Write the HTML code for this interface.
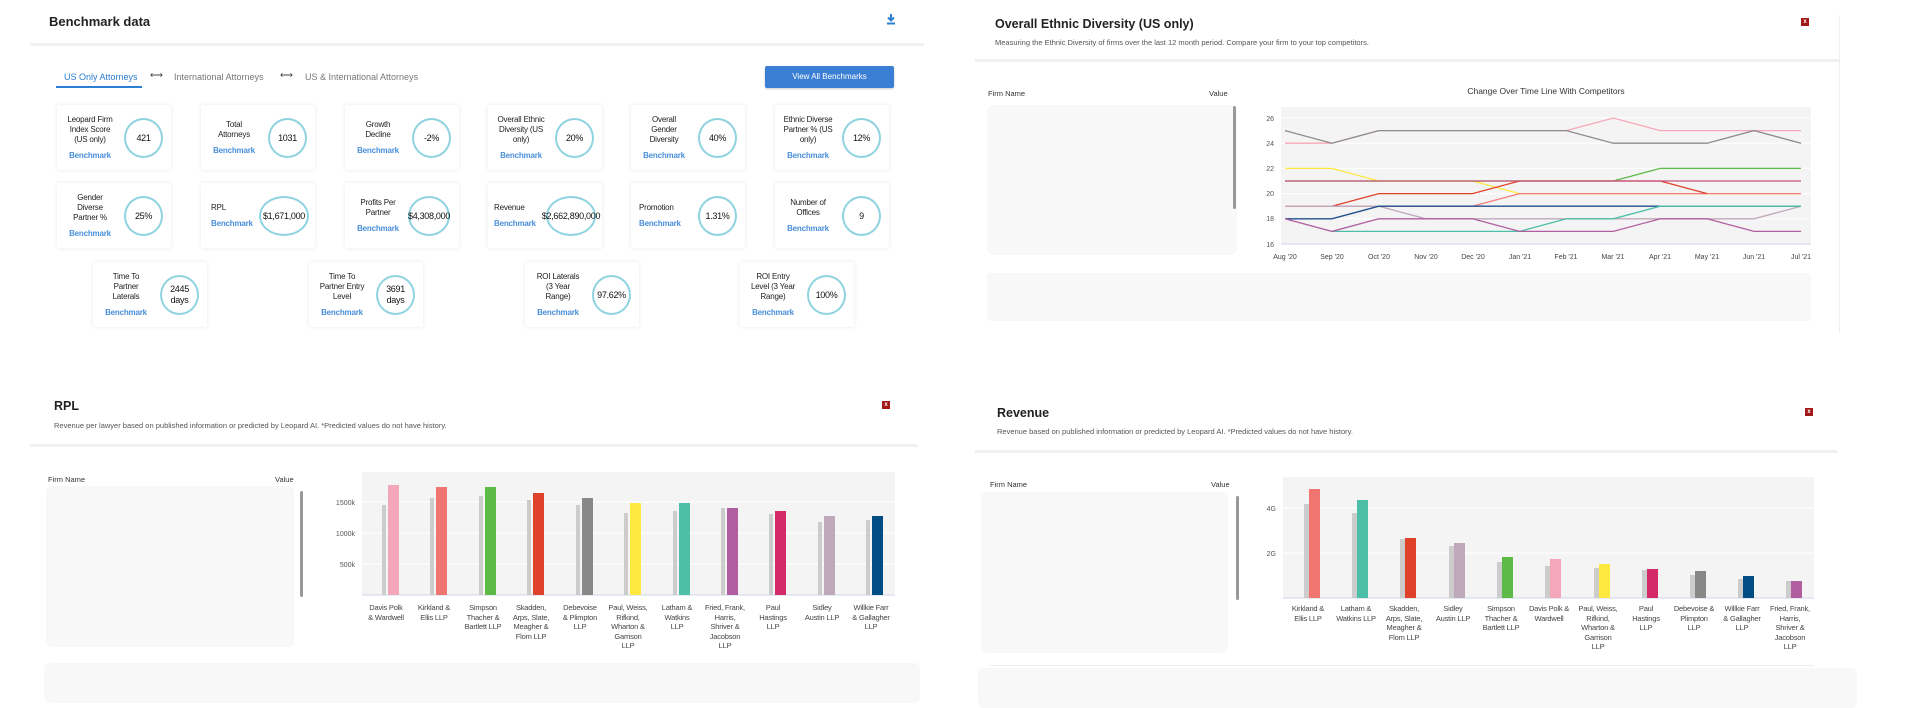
<!DOCTYPE html>
<html><head><meta charset="utf-8">
<style>
*{margin:0;padding:0;box-sizing:border-box}
body{width:1920px;height:691px;background:#fff;font-family:"Liberation Sans",sans-serif;color:#222;position:relative;overflow:hidden}
.a{position:absolute}
.t{font-weight:bold;font-size:13px;color:#222}
.sub{font-size:7.5px;color:#555}
.div{height:3px;background:#f1f1f1}
.card{position:absolute;width:114px;height:65px;background:#fff;box-shadow:0 0 4px rgba(0,0,0,0.09);border-radius:2px}
.card .lb{position:absolute;left:4px;width:58px;top:0;height:65px;display:flex;flex-direction:column;justify-content:center;align-items:center;text-align:center;font-size:8px;line-height:10px;color:#222;white-space:nowrap;letter-spacing:-0.2px}
.card .lb.l{align-items:flex-start;text-align:left;left:12px}
.card .lb b{color:#4a8fdb;font-size:8px;margin-top:6px;display:block}
.card .c{position:absolute;left:67px;top:13px;width:39px;height:40px;border:2px solid #8fd3e0;border-radius:50%;display:flex;align-items:center;justify-content:center;font-size:9px;color:#111;white-space:nowrap;text-align:center;line-height:11px;letter-spacing:-0.3px}
.cls{position:absolute;width:8px;height:8px;background:#a01818;color:#fff;font-size:6px;line-height:8px;text-align:center;font-weight:bold}
.lst{position:absolute;background:#f8f8f8;border-radius:6px}
.sb{position:absolute;width:3px;background:#999;border-radius:2px}
.hd{position:absolute;font-size:7.5px;color:#333}
.xl{position:absolute;font-size:7.5px;color:#444;text-align:center;width:48px;line-height:9.5px;letter-spacing:-0.2px}
</style></head><body>

<div class="a t" style="left:49px;top:14px">Benchmark data</div>
<svg class="a" style="left:886px;top:13px" width="10" height="12" viewBox="0 0 10 12"><path d="M5 1v6M2 4.5l3 3 3-3" stroke="#2d7fd3" stroke-width="2" fill="none"/><rect x="1" y="9.5" width="8" height="2" fill="#2d7fd3"/></svg>
<div class="a div" style="left:30px;top:43px;width:894px"></div>
<div class="a" style="left:64px;top:72px;font-size:9px;color:#2d7fd3">US Only Attorneys</div>
<div class="a" style="left:56px;top:86px;width:86px;height:2px;background:#2d7fd3"></div>
<div class="a" style="left:150px;top:70px;font-size:9px;color:#444">&#10231;</div>
<div class="a" style="left:174px;top:72px;font-size:9px;color:#777">International Attorneys</div>
<div class="a" style="left:280px;top:70px;font-size:9px;color:#444">&#10231;</div>
<div class="a" style="left:305px;top:72px;font-size:9px;color:#777">US &amp; International Attorneys</div>
<div class="a" style="left:765px;top:66px;width:129px;height:22px;background:#3b7fd4;border-radius:2px;color:#fff;font-size:8px;text-align:center;line-height:22px;box-shadow:0 1px 2px rgba(0,0,0,.2)">View All Benchmarks</div>

<div class="card" style="left:57px;top:105px"><div class="lb">Leopard Firm<br>Index Score<br>(US only)<b>Benchmark</b></div><div class="c">421</div></div>
<div class="card" style="left:201px;top:105px"><div class="lb">Total<br>Attorneys<b>Benchmark</b></div><div class="c">1031</div></div>
<div class="card" style="left:345px;top:105px"><div class="lb">Growth<br>Decline<b>Benchmark</b></div><div class="c">-2%</div></div>
<div class="card" style="left:488px;top:105px"><div class="lb">Overall Ethnic<br>Diversity (US<br>only)<b>Benchmark</b></div><div class="c">20%</div></div>
<div class="card" style="left:631px;top:105px"><div class="lb">Overall<br>Gender<br>Diversity<b>Benchmark</b></div><div class="c">40%</div></div>
<div class="card" style="left:775px;top:105px"><div class="lb">Ethnic Diverse<br>Partner % (US<br>only)<b>Benchmark</b></div><div class="c">12%</div></div>

<div class="card" style="left:57px;top:183px"><div class="lb">Gender<br>Diverse<br>Partner %<b>Benchmark</b></div><div class="c">25%</div></div>
<div class="card" style="left:201px;top:183px"><div class="lb l" style="left:10px">RPL<b>Benchmark</b></div><div class="c" style="left:58px;width:50px">$1,671,000</div></div>
<div class="card" style="left:345px;top:183px"><div class="lb">Profits Per<br>Partner<b>Benchmark</b></div><div class="c" style="left:63px;width:42px">$4,308,000</div></div>
<div class="card" style="left:488px;top:183px"><div class="lb l" style="left:6px">Revenue<b>Benchmark</b></div><div class="c" style="left:58px;width:50px">$2,662,890,000</div></div>
<div class="card" style="left:631px;top:183px"><div class="lb l" style="left:8px">Promotion<b>Benchmark</b></div><div class="c">1.31%</div></div>
<div class="card" style="left:775px;top:183px"><div class="lb">Number of<br>Offices<b>Benchmark</b></div><div class="c">9</div></div>

<div class="card" style="left:93px;top:262px"><div class="lb">Time To<br>Partner<br>Laterals<b>Benchmark</b></div><div class="c">2445<br>days</div></div>
<div class="card" style="left:309px;top:262px"><div class="lb">Time To<br>Partner Entry<br>Level<b>Benchmark</b></div><div class="c">3691<br>days</div></div>
<div class="card" style="left:525px;top:262px"><div class="lb">ROI Laterals<br>(3 Year<br>Range)<b>Benchmark</b></div><div class="c">97.62%</div></div>
<div class="card" style="left:740px;top:262px"><div class="lb">ROI Entry<br>Level (3 Year<br>Range)<b>Benchmark</b></div><div class="c">100%</div></div>

<div class="a t" style="left:995px;top:17px;font-size:12.5px">Overall Ethnic Diversity (US only)</div>
<div class="a sub" style="left:995px;top:38px">Measuring the Ethnic Diversity of firms over the last 12 month period. Compare your firm to your top competitors.</div>
<div class="cls" style="left:1801px;top:18px">x</div>
<div class="a" style="left:1839px;top:15px;width:1px;height:318px;background:#f0f0f0"></div>
<div class="a div" style="left:975px;top:59px;width:864px"></div>
<div class="hd" style="left:988px;top:89px">Firm Name</div>
<div class="hd" style="left:1209px;top:89px">Value</div>
<div class="lst" style="left:987px;top:105px;width:250px;height:150px"></div>
<div class="sb" style="left:1233px;top:106px;height:103px"></div>
<div class="a" style="left:1281px;top:86px;width:530px;text-align:center;font-size:8.5px;color:#333">Change Over Time Line With Competitors</div>
<div class="lst" style="left:987px;top:273px;width:824px;height:48px;border-radius:3px"></div>

<div class="a t" style="left:54px;top:399px;font-size:12.5px">RPL</div>
<div class="a sub" style="left:54px;top:421px">Revenue per lawyer based on published information or predicted by Leopard AI. *Predicted values do not have history.</div>
<div class="cls" style="left:882px;top:401px">x</div>
<div class="a div" style="left:30px;top:444px;width:888px"></div>
<div class="hd" style="left:48px;top:475px">Firm Name</div>
<div class="hd" style="left:275px;top:475px">Value</div>
<div class="lst" style="left:46px;top:486px;width:248px;height:161px"></div>
<div class="sb" style="left:300px;top:491px;height:106px"></div>
<div class="lst" style="left:44px;top:663px;width:876px;height:40px"></div>

<div class="a t" style="left:997px;top:406px;font-size:12.5px">Revenue</div>
<div class="a sub" style="left:997px;top:427px">Revenue based on published information or predicted by Leopard AI. *Predicted values do not have history.</div>
<div class="cls" style="left:1805px;top:408px">x</div>
<div class="a div" style="left:975px;top:450px;width:862px"></div>
<div class="hd" style="left:990px;top:480px">Firm Name</div>
<div class="hd" style="left:1211px;top:480px">Value</div>
<div class="lst" style="left:981px;top:492px;width:247px;height:161px"></div>
<div class="sb" style="left:1236px;top:496px;height:104px"></div>
<div class="a" style="left:990px;top:665px;width:824px;height:1px;background:#eee"></div>
<div class="lst" style="left:978px;top:668px;width:879px;height:40px"></div>

<svg class="a" style="left:0;top:0" width="1920" height="691" font-family="Liberation Sans, sans-serif">
<rect x="1281" y="107" width="530" height="137" fill="#f4f4f4"/>
<g stroke="#fff" stroke-width="1"><line x1="1281" x2="1811" y1="118" y2="118"/><line x1="1281" x2="1811" y1="143.2" y2="143.2"/><line x1="1281" x2="1811" y1="168.4" y2="168.4"/><line x1="1281" x2="1811" y1="193.6" y2="193.6"/><line x1="1281" x2="1811" y1="218.8" y2="218.8"/></g>
<line x1="1281" x2="1811" y1="244" y2="244" stroke="#cdd6ea"/>
<g font-size="7" fill="#555" text-anchor="end"><text x="1274" y="121">26</text><text x="1274" y="146">24</text><text x="1274" y="171">22</text><text x="1274" y="196">20</text><text x="1274" y="221">18</text><text x="1274" y="247">16</text></g>
<g font-size="7" fill="#444" text-anchor="middle"><text x="1285" y="259">Aug '20</text><text x="1332" y="259">Sep '20</text><text x="1379" y="259">Oct '20</text><text x="1426" y="259">Nov '20</text><text x="1473" y="259">Dec '20</text><text x="1520" y="259">Jan '21</text><text x="1566" y="259">Feb '21</text><text x="1613" y="259">Mar '21</text><text x="1660" y="259">Apr '21</text><text x="1707" y="259">May '21</text><text x="1754" y="259">Jun '21</text><text x="1801" y="259">Jul '21</text></g>
<g fill="none" stroke-width="1.3">
<polyline stroke="#f7a8b8" points="1285,143.2 1331.9,143.2 1378.8,130.6 1425.7,130.6 1472.6,130.6 1519.5,130.6 1566.4,130.6 1613.3,118 1660.2,130.6 1707.1,130.6 1754,130.6 1801,130.6"/>
<polyline stroke="#8c8c8c" points="1285,130.6 1331.9,143.2 1378.8,130.6 1425.7,130.6 1472.6,130.6 1519.5,130.6 1566.4,130.6 1613.3,143.2 1660.2,143.2 1707.1,143.2 1754,130.6 1801,143.2"/>
<polyline stroke="#fde93f" points="1285,168.4 1331.9,168.4 1378.8,181 1425.7,181 1472.6,181 1519.5,193.6 1566.4,193.6 1613.3,193.6 1660.2,193.6 1707.1,193.6 1754,193.6 1801,193.6"/>
<polyline stroke="#5dba47" points="1285,181 1613.3,181 1660.2,168.4 1801,168.4"/>
<polyline stroke="#f47c7c" points="1285,206.2 1472.6,206.2 1519.5,193.6 1801,193.6"/>
<polyline stroke="#e0412a" points="1331.9,206.2 1378.8,193.6 1472.6,193.6 1519.5,181 1660.2,181 1707.1,193.6"/>
<polyline stroke="#c8507a" points="1285,181 1801,181"/>
<polyline stroke="#c0a8bb" points="1285,206.2 1378.8,206.2 1425.7,218.8 1754,218.8 1801,206.2"/>
<polyline stroke="#1f4e8c" points="1285,218.8 1331.9,218.8 1378.8,206.2 1801,206.2"/>
<polyline stroke="#4dbfa6" points="1331.9,231.4 1519.5,231.4 1566.4,218.8 1613.3,218.8 1660.2,206.2 1801,206.2"/>
<polyline stroke="#b05ea0" points="1285,218.8 1331.9,231.4 1378.8,218.8 1472.6,218.8 1519.5,231.4 1613.3,231.4 1660.2,218.8 1707.1,218.8 1754,231.4 1801,231.4"/>
</g>

<rect x="362" y="472" width="533" height="123" fill="#f4f4f4"/>
<g stroke="#fff"><line x1="362" x2="895" y1="502" y2="502"/><line x1="362" x2="895" y1="533" y2="533"/><line x1="362" x2="895" y1="564" y2="564"/></g>
<line x1="362" x2="895" y1="595" y2="595" stroke="#cdd6ea"/>
<g font-size="7" fill="#555" text-anchor="end"><text x="355" y="505">1500k</text><text x="355" y="536">1000k</text><text x="355" y="567">500k</text></g>
<g>
<rect x="382" y="505" width="4" height="90" fill="#ccc"/><rect x="388" y="485" width="11" height="110" fill="#f4a7b9"/>
<rect x="430" y="498" width="4" height="97" fill="#ccc"/><rect x="436" y="487" width="11" height="108" fill="#f07470"/>
<rect x="479" y="496" width="4" height="99" fill="#ccc"/><rect x="485" y="487" width="11" height="108" fill="#5dba47"/>
<rect x="527" y="500" width="4" height="95" fill="#ccc"/><rect x="533" y="493" width="11" height="102" fill="#e0412a"/>
<rect x="576" y="505" width="4" height="90" fill="#ccc"/><rect x="582" y="498" width="11" height="97" fill="#888"/>
<rect x="624" y="513" width="4" height="82" fill="#ccc"/><rect x="630" y="503" width="11" height="92" fill="#fde93f"/>
<rect x="673" y="511" width="4" height="84" fill="#ccc"/><rect x="679" y="503" width="11" height="92" fill="#4dbfa6"/>
<rect x="721" y="508" width="4" height="87" fill="#ccc"/><rect x="727" y="508" width="11" height="87" fill="#b05ea0"/>
<rect x="769" y="514" width="4" height="81" fill="#ccc"/><rect x="775" y="511" width="11" height="84" fill="#d42a6a"/>
<rect x="818" y="522" width="4" height="73" fill="#ccc"/><rect x="824" y="516" width="11" height="79" fill="#c0a8bb"/>
<rect x="866" y="520" width="4" height="75" fill="#ccc"/><rect x="872" y="516" width="11" height="79" fill="#004d84"/>
</g>

<rect x="1283" y="477" width="531" height="121" fill="#f4f4f4"/>
<g stroke="#fff"><line x1="1283" x2="1814" y1="508" y2="508"/><line x1="1283" x2="1814" y1="553" y2="553"/></g>
<line x1="1283" x2="1814" y1="598" y2="598" stroke="#cdd6ea"/>
<g font-size="7" fill="#555" text-anchor="end"><text x="1276" y="511">4G</text><text x="1276" y="556">2G</text></g>
<g>
<rect x="1304" y="504" width="5" height="94" fill="#ccc"/><rect x="1309" y="489" width="11" height="109" fill="#f07470"/>
<rect x="1352" y="513" width="5" height="85" fill="#ccc"/><rect x="1357" y="500" width="11" height="98" fill="#4dbfa6"/>
<rect x="1400" y="539" width="5" height="59" fill="#ccc"/><rect x="1405" y="538" width="11" height="60" fill="#e0412a"/>
<rect x="1449" y="546" width="5" height="52" fill="#ccc"/><rect x="1454" y="543" width="11" height="55" fill="#c0a8bb"/>
<rect x="1497" y="562" width="5" height="36" fill="#ccc"/><rect x="1502" y="557" width="11" height="41" fill="#5dba47"/>
<rect x="1545" y="566" width="5" height="32" fill="#ccc"/><rect x="1550" y="559" width="11" height="39" fill="#f4a7b9"/>
<rect x="1594" y="568" width="5" height="30" fill="#ccc"/><rect x="1599" y="564" width="11" height="34" fill="#fde93f"/>
<rect x="1642" y="570" width="5" height="28" fill="#ccc"/><rect x="1647" y="569" width="11" height="29" fill="#d42a6a"/>
<rect x="1690" y="575" width="5" height="23" fill="#ccc"/><rect x="1695" y="571" width="11" height="27" fill="#888"/>
<rect x="1738" y="579" width="5" height="19" fill="#ccc"/><rect x="1743" y="576" width="11" height="22" fill="#004d84"/>
<rect x="1786" y="581" width="5" height="17" fill="#ccc"/><rect x="1791" y="581" width="11" height="17" fill="#b05ea0"/>
</g>
</svg>

<div class="xl" style="left:362px;top:603px">Davis Polk<br>&amp; Wardwell</div>
<div class="xl" style="left:410px;top:603px">Kirkland &amp;<br>Ellis LLP</div>
<div class="xl" style="left:459px;top:603px">Simpson<br>Thacher &amp;<br>Bartlett LLP</div>
<div class="xl" style="left:507px;top:603px">Skadden,<br>Arps, Slate,<br>Meagher &amp;<br>Flom LLP</div>
<div class="xl" style="left:556px;top:603px">Debevoise<br>&amp; Plimpton<br>LLP</div>
<div class="xl" style="left:604px;top:603px">Paul, Weiss,<br>Rifkind,<br>Wharton &amp;<br>Garrison<br>LLP</div>
<div class="xl" style="left:653px;top:603px">Latham &amp;<br>Watkins<br>LLP</div>
<div class="xl" style="left:701px;top:603px">Fried, Frank,<br>Harris,<br>Shriver &amp;<br>Jacobson<br>LLP</div>
<div class="xl" style="left:749px;top:603px">Paul<br>Hastings<br>LLP</div>
<div class="xl" style="left:798px;top:603px">Sidley<br>Austin LLP</div>
<div class="xl" style="left:847px;top:603px">Willkie Farr<br>&amp; Gallagher<br>LLP</div>

<div class="xl" style="left:1284px;top:604px">Kirkland &amp;<br>Ellis LLP</div>
<div class="xl" style="left:1332px;top:604px">Latham &amp;<br>Watkins LLP</div>
<div class="xl" style="left:1380px;top:604px">Skadden,<br>Arps, Slate,<br>Meagher &amp;<br>Flom LLP</div>
<div class="xl" style="left:1429px;top:604px">Sidley<br>Austin LLP</div>
<div class="xl" style="left:1477px;top:604px">Simpson<br>Thacher &amp;<br>Bartlett LLP</div>
<div class="xl" style="left:1525px;top:604px">Davis Polk &amp;<br>Wardwell</div>
<div class="xl" style="left:1574px;top:604px">Paul, Weiss,<br>Rifkind,<br>Wharton &amp;<br>Garrison<br>LLP</div>
<div class="xl" style="left:1622px;top:604px">Paul<br>Hastings<br>LLP</div>
<div class="xl" style="left:1670px;top:604px">Debevoise &amp;<br>Plimpton<br>LLP</div>
<div class="xl" style="left:1718px;top:604px">Willkie Farr<br>&amp; Gallagher<br>LLP</div>
<div class="xl" style="left:1766px;top:604px">Fried, Frank,<br>Harris,<br>Shriver &amp;<br>Jacobson<br>LLP</div>
</body></html>
